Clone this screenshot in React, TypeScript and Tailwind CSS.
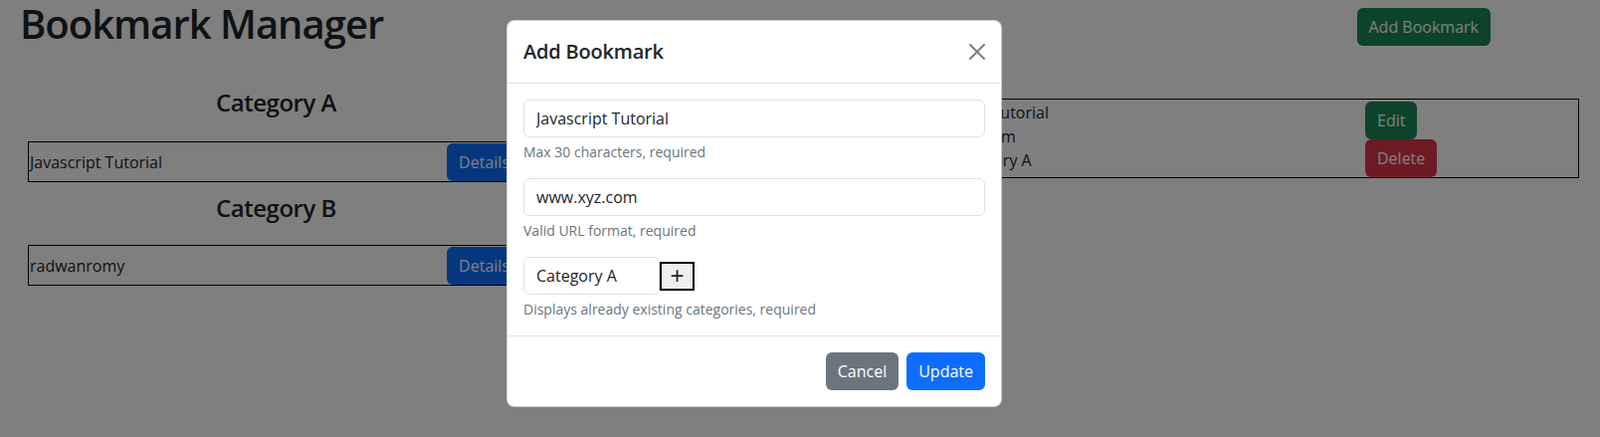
import { useState } from "react";

type Bookmark = {
  title: string;
  url: string;
  category: string;
};

const bookmarks: Bookmark[] = [
  { title: "Javascript Tutorial", url: "www.xyz.com", category: "Category A" },
  { title: "radwanromy", url: "www.radwanromy.com", category: "Category B" },
];

const categories = ["Category A", "Category B"];

function CloseIcon() {
  return (
    <svg viewBox="0 0 16 16" className="h-4 w-4 fill-black opacity-50">
      <path d="M.293.293a1 1 0 0 1 1.414 0L8 6.586 14.293.293a1 1 0 1 1 1.414 1.414L9.414 8l6.293 6.293a1 1 0 0 1-1.414 1.414L8 9.414l-6.293 6.293a1 1 0 0 1-1.414-1.414L6.586 8 .293 1.707a1 1 0 0 1 0-1.414z" />
    </svg>
  );
}

export default function App() {
  const [showModal] = useState(true);
  const selected = bookmarks[0];

  return (
    <div className="relative h-[439px] w-[1608px] overflow-hidden bg-white font-['Open_Sans',sans-serif] text-[#212529]">
      <div className="flex items-start justify-between">
        <h1 className="pl-5 text-[40px] font-semibold leading-[48px] tracking-[-0.025em]">Bookmark Manager</h1>
        <button className="mt-2 mr-[110px] h-[38px] rounded-md bg-[#198754] px-3 text-base text-white">
          Add Bookmark
        </button>
      </div>

      <div className="flex items-start">
        {/* categories list */}
        <div className="w-[527px] pl-[28px]">
          {categories.map((cat, idx) => {
            const items = bookmarks.filter((b) => b.category === cat);
            return (
              <div key={cat} className={idx === 0 ? "mt-[40px]" : "mt-[11px]"}>
                <h4 className="text-center text-2xl font-semibold leading-[29px] tracking-[-0.02em]">{cat}</h4>
                {items.map((b) => (
                  <div
                    key={b.title}
                    className={`${idx === 0 ? "mt-[25px]" : "mt-[23px]"} flex h-[41px] items-center justify-between border border-black pl-px pr-[2px]`}
                  >
                    <span className="text-base">{b.title}</span>
                    <button className="h-[38px] rounded-md bg-[#0d6efd] px-3 text-base text-white">
                      Details
                    </button>
                  </div>
                ))}
              </div>
            );
          })}
        </div>

        {/* details panel */}
        <div className="mt-[51px] ml-[353px] flex w-[707px] border border-black">
          <div className="w-[491px] pt-px text-base leading-6">
            <div>Title: {selected.title}</div>
            <div>URL: {selected.url}</div>
            <div>Category: {selected.category}</div>
          </div>
          <div className="flex flex-col items-start pt-[2px]">
            <button className="h-[38px] rounded-md bg-[#198754] px-3 text-base text-white">Edit</button>
            <button className="h-[38px] rounded-md bg-[#dc3545] px-3 text-base text-white">Delete</button>
          </div>
        </div>
      </div>

      {showModal && (
        <>
          <div className="absolute inset-0 bg-black/50" />
          <div className="absolute top-[20px] left-[509px] w-[498px] rounded-lg border border-black/20 bg-white">
            <div className="flex items-center justify-between border-b border-[#dee2e6] p-4">
              <h5 className="text-xl font-semibold leading-[30px] tracking-[-0.01em]">Add Bookmark</h5>
              <button>
                <CloseIcon />
              </button>
            </div>

            <div className="p-4">
              <input
                defaultValue="Javascript Tutorial"
                className="h-[38px] w-full rounded-md border border-[#dee2e6] px-3 text-base outline-none"
              />
              <div className="mt-1 text-sm leading-[21px] text-[#6c757d]">Max 30 characters, required</div>

              <input
                defaultValue="www.xyz.com"
                className="mt-4 h-[38px] w-full rounded-md border border-[#dee2e6] px-3 text-base outline-none"
              />
              <div className="mt-1 text-sm leading-[21px] text-[#6c757d]">Valid URL format, required</div>

              <div className="mt-4 flex items-center">
                <input
                  defaultValue="Category A"
                  className="h-[38px] w-[137px] rounded-md border border-[#dee2e6] px-3 text-base outline-none"
                />
                <button className="flex h-[29px] w-[35px] items-center justify-center border-2 border-black bg-[#efefef] font-['Liberation_Sans',sans-serif] text-[24px] leading-none">
                  +
                </button>
              </div>
              <div className="mt-1 text-sm leading-[21px] text-[#6c757d]">
                Displays already existing categories, required
              </div>
            </div>

            <div className="flex justify-end border-t border-[#dee2e6] p-3">
              <button className="m-1 h-[38px] rounded-md bg-[#6c757d] px-3 text-base text-white">Cancel</button>
              <button className="m-1 h-[38px] rounded-md bg-[#0d6efd] px-3 text-base text-white">Update</button>
            </div>
          </div>
        </>
      )}
    </div>
  );
}
